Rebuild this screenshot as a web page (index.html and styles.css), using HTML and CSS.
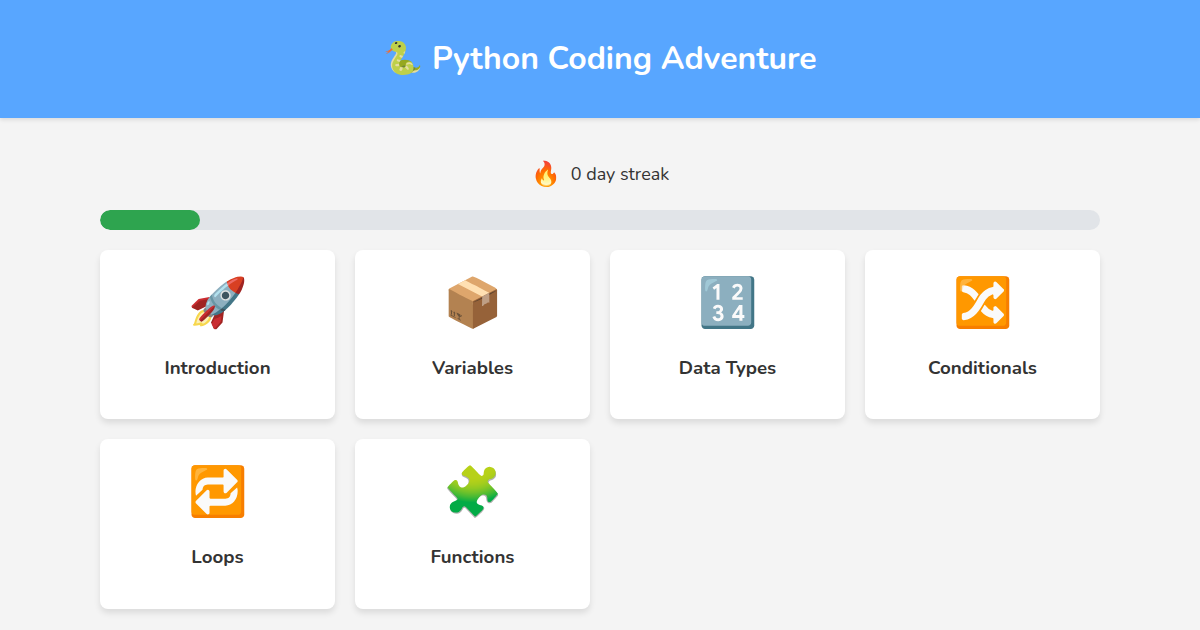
FILE: index.html
```html
<!DOCTYPE html>
<html lang="en">
<head>
  <meta charset="UTF-8">
  <meta name="viewport" content="width=device-width, initial-scale=1.0">
  <title>Python Coding Adventure</title>
  <link rel="stylesheet" href="styles.css">
</head>
<body>
  <header>
    <h1>🐍 Python Coding Adventure</h1>
  </header>

  <main class="container">
    <div class="streak">
      <span class="streak-icon">🔥</span>
      <span>0 day streak</span>
    </div>

    <div class="progress-bar">
      <div class="progress"></div>
    </div>

    <div class="modules">
      <div class="module-card">
        <div class="module-icon">🚀</div>
        <h3>Introduction</h3>
      </div>
      <div class="module-card">
        <div class="module-icon">📦</div>
        <h3>Variables</h3>
      </div>
      <div class="module-card">
        <div class="module-icon">🔢</div>
        <h3>Data Types</h3>
      </div>
      <div class="module-card">
        <div class="module-icon">🔀</div>
        <h3>Conditionals</h3>
      </div>
      <div class="module-card">
        <div class="module-icon">🔁</div>
        <h3>Loops</h3>
      </div>
      <div class="module-card">
        <div class="module-icon">🧩</div>
        <h3>Functions</h3>
      </div>
    </div>
  </main>
</body>
</html>
```
FILE: styles.css
```css
body {
  font-family: "Nunito", "Open Sans", sans-serif;
  background-color: #f4f4f4;
  color: #333;
  margin: 0;
}

header {
  background-color: #58a6ff;
  color: white;
  text-align: center;
  padding: 16px;
  box-shadow: 0 2px 4px rgba(0, 0, 0, 0.1);
}

h1 {
  font-size: 32px;
  line-height: 44px;
  margin: 21px 0;
}

.container {
  max-width: 1000px;
  margin: 32px auto;
  padding: 0 20px;
}

.streak {
  display: flex;
  align-items: center;
  justify-content: center;
  gap: 10px;
  height: 48px;
  font-size: 18px;
}

.streak-icon {
  font-size: 24px;
}

/* Overall progress */
.progress-bar {
  height: 20px;
  margin: 12px 0 20px;
  background-color: #e1e4e8;
  border-radius: 10px;
  overflow: hidden;
}

.progress {
  width: 10%;
  height: 100%;
  background-color: #2ea44f;
  border-radius: 10px;
}

/* Module cards */
.modules {
  display: grid;
  grid-template-columns: repeat(auto-fill, minmax(200px, 1fr));
  gap: 20px;
}

.module-card {
  background-color: white;
  border-radius: 8px;
  padding: 20px;
  text-align: center;
  box-shadow: 0 4px 6px rgba(0, 0, 0, 0.1);
}

.module-icon {
  font-size: 48px;
}
```
